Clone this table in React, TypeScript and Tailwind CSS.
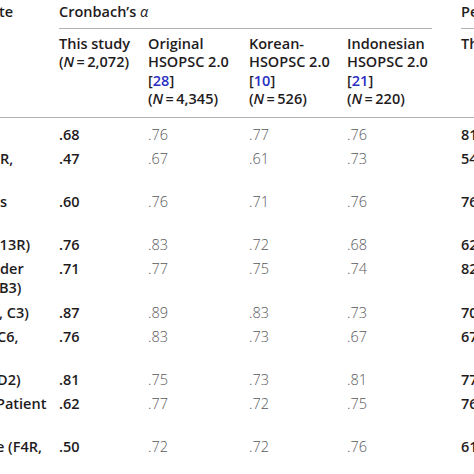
type Row = {
  label: { text: string; shift?: string }[];
  values: string[];
  pct: string;
};

const rows: Row[] = [
  { label: [], values: ['.68', '.76', '.77', '.76'], pct: '81' },
  { label: [{ text: 'R,' }, { text: '' }], values: ['.47', '.67', '.61', '.73'], pct: '54' },
  { label: [{ text: 's' }, { text: '' }], values: ['.60', '.76', '.71', '.76'], pct: '76' },
  { label: [{ text: '(13R)', shift: '-ml-[5px]' }], values: ['.76', '.83', '.72', '.68'], pct: '62' },
  { label: [{ text: 'der' }, { text: 'B3)', shift: '-ml-[1px]' }], values: ['.71', '.77', '.75', '.74'], pct: '82' },
  { label: [{ text: ', C3)', shift: '-ml-[1px]' }], values: ['.87', '.89', '.83', '.73'], pct: '70' },
  { label: [{ text: 'C6,', shift: '-ml-[3px]' }, { text: '' }], values: ['.76', '.83', '.73', '.67'], pct: '67' },
  { label: [{ text: 'D2)', shift: '-ml-[3px]' }], values: ['.81', '.75', '.73', '.81'], pct: '77' },
  { label: [{ text: 'Patient', shift: '-ml-[4px]' }, { text: '' }], values: ['.62', '.77', '.72', '.75'], pct: '76' },
  { label: [{ text: 'e (F4R,', shift: '-ml-[4px]' }, { text: '' }], values: ['.50', '.72', '.72', '.76'], pct: '61' },
];

function N({ n }: { n: string }) {
  return (
    <>
      (<i>N</i>
      {'\u2006=\u2006'}
      {n})
    </>
  );
}

function Ref({ n }: { n: string }) {
  return (
    <>
      [<span className="text-[#2a2fc2]">{n}</span>]
    </>
  );
}

const cols = 'grid grid-cols-[59px_89px_101px_98px_114px_1fr]';

export default function App() {
  return (
    <div
      className="w-[474px] h-[474px] overflow-hidden bg-white text-[14.5px] text-[#1f1c1d]"
      style={{ fontFamily: '"Open Sans", "Noto Sans", sans-serif' }}
    >
      {/* header row 1 */}
      <div className={`${cols} font-semibold leading-[18px]`}>
        <div className="pt-[3px] pb-[7px] -ml-[1px] overflow-hidden whitespace-nowrap">te</div>
        <div className="col-span-4 pr-[29px]">
          <div className="pt-[3px] pb-[7px] border-b border-[#b3b3b3]">
            Cronbach’s <i className="font-normal">α</i>
          </div>
        </div>
        <div className="pt-[3px] pb-[7px] border-b border-[#b3b3b3] whitespace-nowrap">Percentage</div>
      </div>

      {/* header row 2 */}
      <div className={`${cols} font-semibold leading-[18.3px] pt-[6px] pb-[7px] border-b border-[#b3b3b3] h-[89px]`}>
        <div />
        <div className="whitespace-nowrap">
          <div>This study</div>
          <div>
            <N n="2,072" />
          </div>
        </div>
        <div className="whitespace-nowrap">
          <div>Original</div>
          <div>HSOPSC 2.0</div>
          <div>
            <Ref n="28" />
          </div>
          <div>
            <N n="4,345" />
          </div>
        </div>
        <div className="whitespace-nowrap">
          <div>Korean-</div>
          <div>HSOPSC 2.0</div>
          <div>
            <Ref n="10" />
          </div>
          <div>
            <N n="526" />
          </div>
        </div>
        <div className="whitespace-nowrap">
          <div>Indonesian</div>
          <div>HSOPSC 2.0</div>
          <div>
            <Ref n="21" />
          </div>
          <div>
            <N n="220" />
          </div>
        </div>
        <div className="whitespace-nowrap">This study</div>
      </div>

      {/* body */}
      <div className="pt-[4px] leading-[19px]">
        {rows.map((r, i) => {
          const lines = Math.max(1, r.label.length);
          return (
            <div key={i} className={`${cols} py-[2.6px]`} style={{ minHeight: lines * 19 + 5.2 }}>
              <div className="font-semibold overflow-hidden whitespace-nowrap">
                {r.label.map((l, j) => (
                  <div key={j} className={l.shift ?? ''}>
                    {l.text || '\u00a0'}
                  </div>
                ))}
              </div>
              <div className="font-semibold">{r.values[0]}</div>
              <div className="font-light text-[#58595b]">{r.values[1]}</div>
              <div className="font-light text-[#58595b]">{r.values[2]}</div>
              <div className="font-light text-[#58595b]">{r.values[3]}</div>
              <div className="font-semibold">{r.pct}.0%</div>
            </div>
          );
        })}
      </div>
    </div>
  );
}
